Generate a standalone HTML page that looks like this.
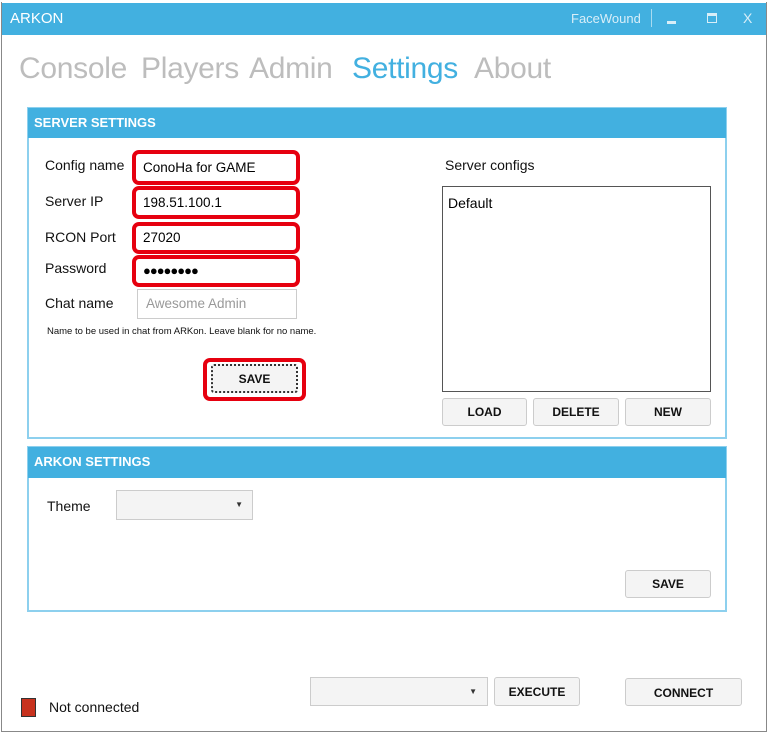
<!DOCTYPE html>
<html><head><style>
*{box-sizing:border-box;margin:0;padding:0}
body{width:768px;height:733px;background:#fff;font-family:"Liberation Sans",sans-serif;position:relative;overflow:hidden}
.a{position:absolute}
.win{left:1px;top:2px;width:766px;height:730px;border:1px solid #888;border-top:none}
.title{left:2px;top:3px;width:764px;height:32px;background:#42b0e0;color:#fff}
.hdr{background:#42b0e0;color:#fff;font-size:13px;font-weight:bold;padding-left:6px;line-height:30px}
.pan{border:2px solid #8dd0ee}
.lbl{font-size:14px;color:#111}
.inp{border:1px solid #ccc;height:30px;font-size:13.5px;padding-left:8px;line-height:28px;background:#fff}
.red{border:4px solid #e6000f;border-radius:7px}
.btn{background:#f4f4f4;border:1px solid #ccc;border-radius:3px;font-size:12px;font-weight:bold;text-align:center;color:#111}
.nav{font-size:30px;color:#bdbdbd;top:52px;letter-spacing:-0.3px}
</style></head><body>
<div class="a win"></div>
<div class="a title">
 <span class="a" style="left:8px;top:7px;font-size:15px">ARKON</span>
 <span class="a" style="left:569px;top:8px;font-size:13px;color:#d8eef8">FaceWound</span>
 <div class="a" style="left:649px;top:6px;width:1px;height:18px;background:#a8dbf0"></div>
 <div class="a" style="left:665px;top:18px;width:9px;height:3px;background:#d8eef8"></div>
 <div class="a" style="left:705px;top:10px;width:10px;height:10px;border:1px solid #d8eef8;border-top-width:3px"></div>
 <span class="a" style="left:741px;top:7px;font-size:14px;color:#d8eef8">X</span>
</div>
<span class="a nav" style="left:19px">Console</span>
<span class="a nav" style="left:141px">Players</span>
<span class="a nav" style="left:249px">Admin</span>
<span class="a nav" style="left:352px;color:#42b0e0">Settings</span>
<span class="a nav" style="left:474px">About</span>

<div class="a pan" style="left:27px;top:107px;width:700px;height:332px"></div>
<div class="a hdr" style="left:28px;top:108px;width:698px;height:30px">SERVER SETTINGS</div>
<span class="a lbl" style="left:45px;top:157px">Config name</span>
<span class="a lbl" style="left:45px;top:193px">Server IP</span>
<span class="a lbl" style="left:45px;top:229px">RCON Port</span>
<span class="a lbl" style="left:45px;top:260px">Password</span>
<span class="a lbl" style="left:45px;top:295px">Chat name</span>
<div class="a inp red" style="left:132px;top:150px;width:168px;height:35px;line-height:27px;padding-left:7px">ConoHa for GAME</div>
<div class="a inp red" style="left:132px;top:186px;width:168px;height:33px;line-height:25px;padding-left:7px">198.51.100.1</div>
<div class="a inp red" style="left:132px;top:222px;width:168px;height:32px;line-height:24px;padding-left:7px">27020</div>
<div class="a inp red" style="left:132px;top:255px;width:168px;height:32px;line-height:24px;padding-left:7px;font-size:13px;letter-spacing:-1px">●●●●●●●●</div>
<div class="a inp" style="left:137px;top:289px;width:160px;color:#999">Awesome Admin</div>
<span class="a" style="left:47px;top:326px;font-size:9.5px;color:#111">Name to be used in chat from ARKon. Leave blank for no name.</span>
<div class="a red" style="left:203px;top:358px;width:103px;height:43px"></div>
<div class="a btn" style="left:211px;top:364px;width:87px;height:29px;line-height:27px;border:2px dotted #333">SAVE</div>
<span class="a lbl" style="left:445px;top:157px">Server configs</span>
<div class="a" style="left:442px;top:186px;width:269px;height:206px;border:1px solid #555;font-size:14px;padding:8px 5px">Default</div>
<div class="a btn" style="left:442px;top:398px;width:85px;height:28px;line-height:27px">LOAD</div>
<div class="a btn" style="left:533px;top:398px;width:86px;height:28px;line-height:27px">DELETE</div>
<div class="a btn" style="left:625px;top:398px;width:86px;height:28px;line-height:27px">NEW</div>

<div class="a pan" style="left:27px;top:446px;width:700px;height:166px"></div>
<div class="a hdr" style="left:28px;top:447px;width:698px;height:31px">ARKON SETTINGS</div>
<span class="a lbl" style="left:47px;top:498px">Theme</span>
<div class="a" style="left:116px;top:490px;width:137px;height:30px;border:1px solid #ccc;background:#f4f4f4"><span class="a" style="right:9px;top:9px;font-size:8px;color:#333">▼</span></div>
<div class="a btn" style="left:625px;top:570px;width:86px;height:28px;line-height:27px">SAVE</div>

<div class="a" style="left:21px;top:698px;width:15px;height:19px;background:#c8321e;border:1px solid #333"></div>
<span class="a lbl" style="left:49px;top:699px">Not connected</span>
<div class="a" style="left:310px;top:677px;width:178px;height:29px;border:1px solid #ccc;background:#f4f4f4"><span class="a" style="right:10px;top:9px;font-size:8px;color:#333">▼</span></div>
<div class="a btn" style="left:494px;top:677px;width:86px;height:29px;line-height:28px">EXECUTE</div>
<div class="a btn" style="left:625px;top:678px;width:117px;height:28px;line-height:28px">CONNECT</div>
</body></html>
